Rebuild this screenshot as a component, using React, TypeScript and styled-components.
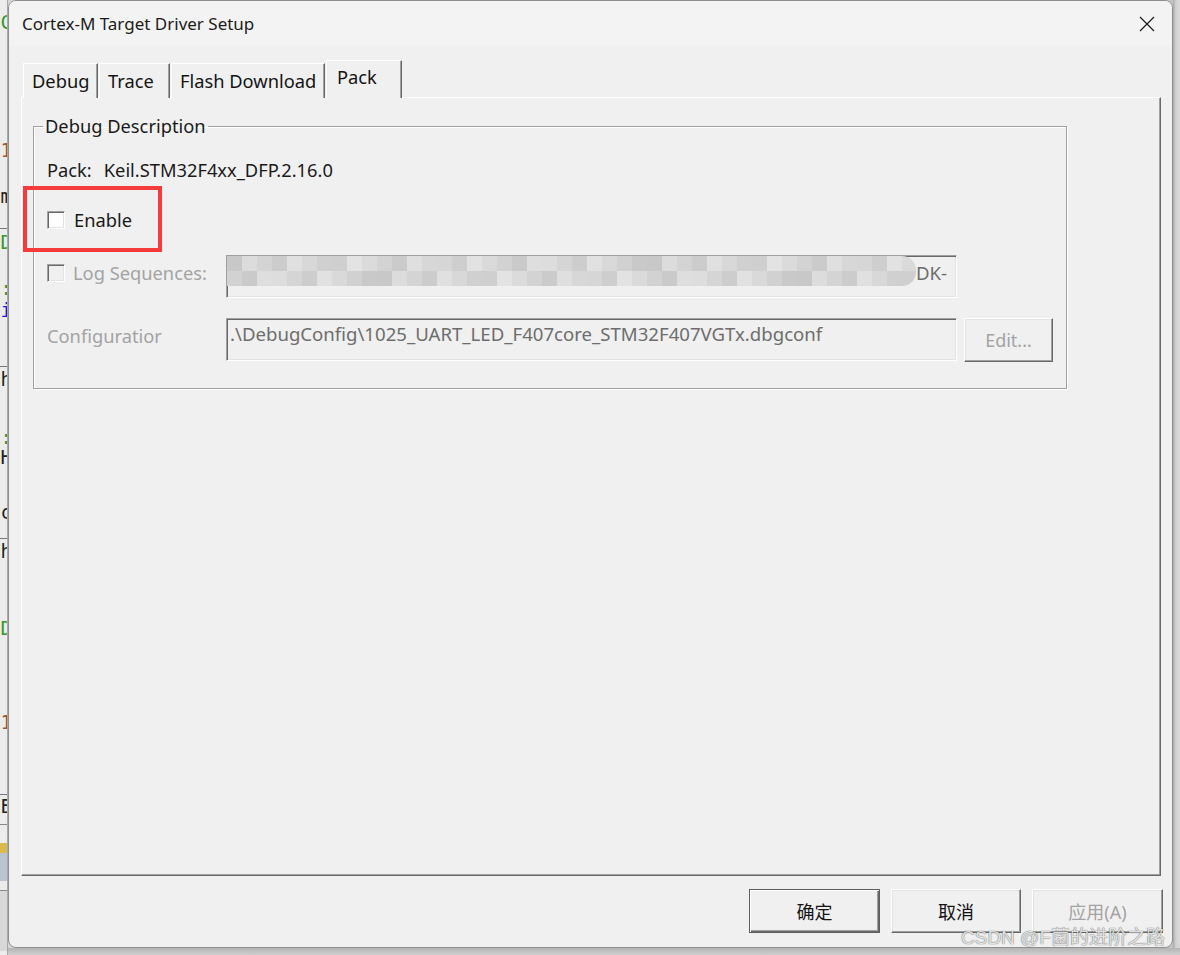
import React from "react";
import styled, { createGlobalStyle } from "styled-components";

const Global = createGlobalStyle`
  html, body { margin: 0; padding: 0; }
  body {
    font-family: "Noto Sans", "Noto Sans CJK SC", sans-serif;
    background: #c9c9c9;
  }
  * { box-sizing: border-box; }
`;

const Page = styled.div`
  width: 1180px;
  height: 955px;
  display: grid;
  grid-template-columns: 8px 1165px 7px;
  grid-template-rows: 948px 7px;
  background: linear-gradient(90deg, #d6d6d6, #c4c4c4);
  overflow: hidden;
`;

const EditorStrip = styled.div`
  grid-column: 1;
  grid-row: 1 / 3;
  background: #ececec;
  border-right: 1px solid #a8a8a8;
  display: flex;
  flex-direction: column;
  overflow: hidden;
  font-family: "DejaVu Sans Mono", monospace;
  font-size: 19px;
`;

const StripRow = styled.div<{ $line?: string; $bg?: string }>`
  flex: none;
  display: flex;
  align-items: center;
  justify-content: flex-end;
  overflow: hidden;
  background: ${(p) => p.$bg || "transparent"};
  border-bottom: ${(p) => (p.$line ? `1px solid ${p.$line}` : "none")};
`;

const StripChar = styled.span<{ $color: string }>`
  color: ${(p) => p.$color};
  margin-right: -5px;
  line-height: 1;
`;

const RightShade = styled.div`
  grid-column: 3;
  grid-row: 1;
  background: linear-gradient(90deg, #a9a9a9, #d0d0d0 40%, #dadada);
`;

const BottomShade = styled.div`
  grid-column: 2 / 4;
  grid-row: 2;
  background: linear-gradient(#b4b4b4, #cfcfcf);
`;

const Window = styled.div`
  grid-column: 2;
  grid-row: 1;
  position: relative;
  display: flex;
  flex-direction: column;
  background: #f0f0f0;
  border: 1px solid #8f8f8f;
  border-radius: 8px;
  overflow: hidden;
  color: #1a1a1a;
`;

const TitleBar = styled.div`
  height: 45px;
  flex: none;
  display: flex;
  align-items: center;
  justify-content: space-between;
  padding: 0 17px 0 13px;
  background: #f3f3f3;
`;

const Title = styled.div`
  font-size: 17px;
  color: #1b1b1b;
  padding-bottom: 1px;
`;

const CloseIcon = styled.svg`
  width: 16px;
  height: 16px;
  display: block;
`;

const Body = styled.div`
  flex: 1;
  display: flex;
  flex-direction: column;
  padding: 14px 11px 0 12px;
`;

const TabStrip = styled.div`
  height: 38px;
  display: flex;
  align-items: flex-end;
  gap: 1px;
  padding-left: 2px;
  position: relative;
  z-index: 1;
  margin-bottom: -1px;
`;

const Tab = styled.div<{ $w: number; $active?: boolean }>`
  width: ${(p) => p.$w}px;
  height: ${(p) => (p.$active ? 38 : 35)}px;
  padding: ${(p) => (p.$active ? "4px 0 0 10px" : "5px 0 0 8px")};
  font-size: 18.3px;
  line-height: 24px;
  color: #141414;
  background: #f0f0f0;
  border-top: 1px solid #ffffff;
  border-left: 1px solid #ffffff;
  border-right: 1px solid #696969;
  box-shadow: inset -1px 0 0 #a0a0a0;
  white-space: nowrap;
`;

const TabPanel = styled.div`
  height: 779px;
  display: flex;
  flex-direction: column;
  padding: 16px 0 0 11px;
  border: 1px solid;
  border-color: #ffffff #696969 #696969 #ffffff;
  box-shadow: inset -1px -1px 0 #a0a0a0;
`;

const GroupBox = styled.fieldset`
  margin: 0;
  width: 1034px;
  height: 275px;
  padding: 20px 0 0 13px;
  border: 1px solid #a0a0a0;
  box-shadow: 1px 1px 0 #ffffff, inset 1px 1px 0 #ffffff;
  display: flex;
  flex-direction: column;
`;

const Legend = styled.legend`
  margin-left: -4px;
  padding: 0 2px;
  font-size: 18.3px;
  line-height: 24px;
  color: #1a1a1a;
`;

const Text = styled.div<{ $disabled?: boolean }>`
  font-size: 18.3px;
  line-height: 24px;
  white-space: nowrap;
  color: ${(p) => (p.$disabled ? "#a3a3a3" : "#1a1a1a")};
`;

const PackRow = styled.div`
  height: 24px;
  display: flex;
  gap: 12px;
`;

const CheckRow = styled.label`
  height: 24px;
  margin-top: 26px;
  display: flex;
  align-items: center;
  gap: 9px;
`;

const CheckBox = styled.span<{ $disabled?: boolean }>`
  width: 18px;
  height: 18px;
  flex: none;
  background: ${(p) => (p.$disabled ? "#f0f0f0" : "#ffffff")};
  border: 1px solid;
  border-color: #a0a0a0 #ffffff #ffffff #a0a0a0;
  box-shadow: inset 1px 1px 0 #696969, inset -1px -1px 0 #e3e3e3;
`;

const FieldRow = styled.div<{ $top: number }>`
  margin-top: ${(p) => p.$top}px;
  height: 43px;
  display: grid;
  grid-template-columns: 172px 731px 89px;
  column-gap: 7px;
`;

const FieldLabel = styled.div`
  height: 36px;
  display: flex;
  align-items: center;
  gap: 8px;
`;

const Field = styled.div`
  height: 43px;
  display: flex;
  align-items: flex-start;
  padding: 1px 0 0 3px;
  border: 1px solid;
  border-color: #a0a0a0 #ffffff #ffffff #a0a0a0;
  box-shadow: inset 1px 1px 0 #696969, inset -1px -1px 0 #e3e3e3;
  background: #f0f0f0;
  overflow: hidden;
`;

const FieldText = styled.span`
  font-size: 18.6px;
  line-height: 28px;
  color: #6d6d6d;
  white-space: nowrap;
`;

const Mosaic = styled.div`
  width: 689px;
  margin-left: -3px;
  margin-top: -1px;
  display: grid;
  grid-template-columns: repeat(46, 15px);
  grid-auto-rows: 15px;
  flex: none;
  border-radius: 0 14px 14px 0;
  overflow: hidden;
  filter: blur(0.6px);
`;

const Cell = styled.span`
  display: block;
`;

const Button3D = styled.button<{ $default?: boolean; $w: number }>`
  width: ${(p) => p.$w}px;
  height: 44px;
  padding: 0;
  background: #f0f0f0;
  font-family: "Noto Sans", "Noto Sans CJK SC", sans-serif;
  font-size: 18px;
  color: ${(p) => (p.disabled ? "#a3a3a3" : "#141414")};
  border: 1px solid;
  border-color: ${(p) =>
    p.$default ? "#5e5e5e" : "#ffffff #696969 #696969 #ffffff"};
  box-shadow: ${(p) =>
    p.$default
      ? "inset 1px 1px 0 #ffffff, inset -1px -1px 0 #696969, inset -2px -2px 0 #a0a0a0"
      : "inset -1px -1px 0 #a0a0a0, inset 1px 1px 0 #e3e3e3"};
`;

const ButtonRow = styled.div`
  display: flex;
  justify-content: flex-end;
  gap: 11px;
  margin-right: -2px;
  padding-top: 13px;
`;

const Highlight = styled.div`
  position: absolute;
  left: 14px;
  top: 185px;
  width: 139px;
  height: 66px;
  border: 4px solid #f53b3b;
  pointer-events: none;
`;

const Watermark = styled.div`
  position: absolute;
  right: 7px;
  bottom: -3px;
  font-family: "Liberation Sans", "Noto Sans CJK SC", sans-serif;
  font-size: 19px;
  line-height: 24px;
  color: rgba(255, 255, 255, 0.85);
  text-shadow: 0 0 1px rgba(0, 0, 0, 0.55), 0 0 1px rgba(0, 0, 0, 0.4);
  white-space: nowrap;
  pointer-events: none;
`;

const stripRows: { h: number; ch?: string; c?: string; line?: string; bg?: string }[] = [
  { h: 8 },
  { h: 28, ch: "C", c: "#2f9a2f" },
  { h: 102 },
  { h: 24, ch: "1", c: "#a0522d" },
  { h: 24 },
  { h: 20, ch: "m", c: "#222" },
  { h: 23, line: "#777" },
  { h: 26, ch: "D", c: "#2f9a2f" },
  { h: 22 },
  { h: 22, ch: ":", c: "#2f9a2f" },
  { h: 22, ch: "i", c: "#1a1ae6" },
  { h: 46, line: "#777" },
  { h: 24, ch: "h", c: "#222" },
  { h: 36 },
  { h: 20, ch: ":", c: "#2f9a2f" },
  { h: 20, ch: "H", c: "#222" },
  { h: 34 },
  { h: 22, ch: "c", c: "#222" },
  { h: 16, line: "#777" },
  { h: 24, ch: "h", c: "#222" },
  { h: 52 },
  { h: 26, ch: "D", c: "#2f9a2f" },
  { h: 68 },
  { h: 26, ch: "1", c: "#a0522d" },
  { h: 60, line: "#777" },
  { h: 22, ch: "E", c: "#222" },
  { h: 8, line: "#8a8a8a" },
  { h: 18 },
  { h: 10, bg: "#ddb84a" },
  { h: 28, bg: "#b9c4d0" },
  { h: 10, line: "#888" },
  { h: 60, bg: "#d8d8d8" },
];

const mosaicShades = Array.from({ length: 92 }, (_, i) => {
  const v = 200 + ((i * 37 + (i % 7) * 11) % 28);
  return `rgb(${v},${v},${v})`;
});

export default function App() {
  return (
    <>
      <Global />
      <Page>
        <EditorStrip>
          {stripRows.map((r, i) => (
            <StripRow key={i} style={{ height: r.h }} $line={r.line} $bg={r.bg}>
              {r.ch && <StripChar $color={r.c || "#222"}>{r.ch}</StripChar>}
            </StripRow>
          ))}
        </EditorStrip>
        <Window>
          <TitleBar>
            <Title>Cortex-M Target Driver Setup</Title>
            <CloseIcon viewBox="0 0 16 16">
              <path d="M1 1 L15 15 M15 1 L1 15" stroke="#1a1a1a" strokeWidth="1.2" />
            </CloseIcon>
          </TitleBar>
          <Body>
            <TabStrip>
              <Tab $w={75}>Debug</Tab>
              <Tab $w={71}>Trace</Tab>
              <Tab $w={154}>Flash Download</Tab>
              <Tab $w={76} $active>
                Pack
              </Tab>
            </TabStrip>
            <TabPanel>
              <GroupBox>
                <Legend>Debug Description</Legend>
                <PackRow>
                  <Text>Pack:</Text>
                  <Text>Keil.STM32F4xx_DFP.2.16.0</Text>
                </PackRow>
                <CheckRow>
                  <CheckBox />
                  <Text>Enable</Text>
                </CheckRow>
                <FieldRow $top={23}>
                  <FieldLabel>
                    <CheckBox $disabled />
                    <Text $disabled>Log Sequences:</Text>
                  </FieldLabel>
                  <Field>
                    <Mosaic>
                      {mosaicShades.map((s, i) => (
                        <Cell key={i} style={{ background: s }} />
                      ))}
                    </Mosaic>
                    <FieldText style={{ marginTop: 2 }}>DK-</FieldText>
                  </Field>
                </FieldRow>
                <FieldRow $top={20}>
                  <FieldLabel>
                    <Text $disabled>Configuratior</Text>
                  </FieldLabel>
                  <Field>
                    <FieldText>.\DebugConfig\1025_UART_LED_F407core_STM32F407VGTx.dbgconf</FieldText>
                  </Field>
                  <Button3D $w={89} disabled>
                    Edit...
                  </Button3D>
                </FieldRow>
              </GroupBox>
            </TabPanel>
            <ButtonRow>
              <Button3D $w={131} $default>
                确定
              </Button3D>
              <Button3D $w={130}>取消</Button3D>
              <Button3D $w={131} disabled>
                应用(A)
              </Button3D>
            </ButtonRow>
          </Body>
          <Highlight />
          <Watermark>CSDN @F菌的进阶之路</Watermark>
        </Window>
        <RightShade />
        <BottomShade />
      </Page>
    </>
  );
}
